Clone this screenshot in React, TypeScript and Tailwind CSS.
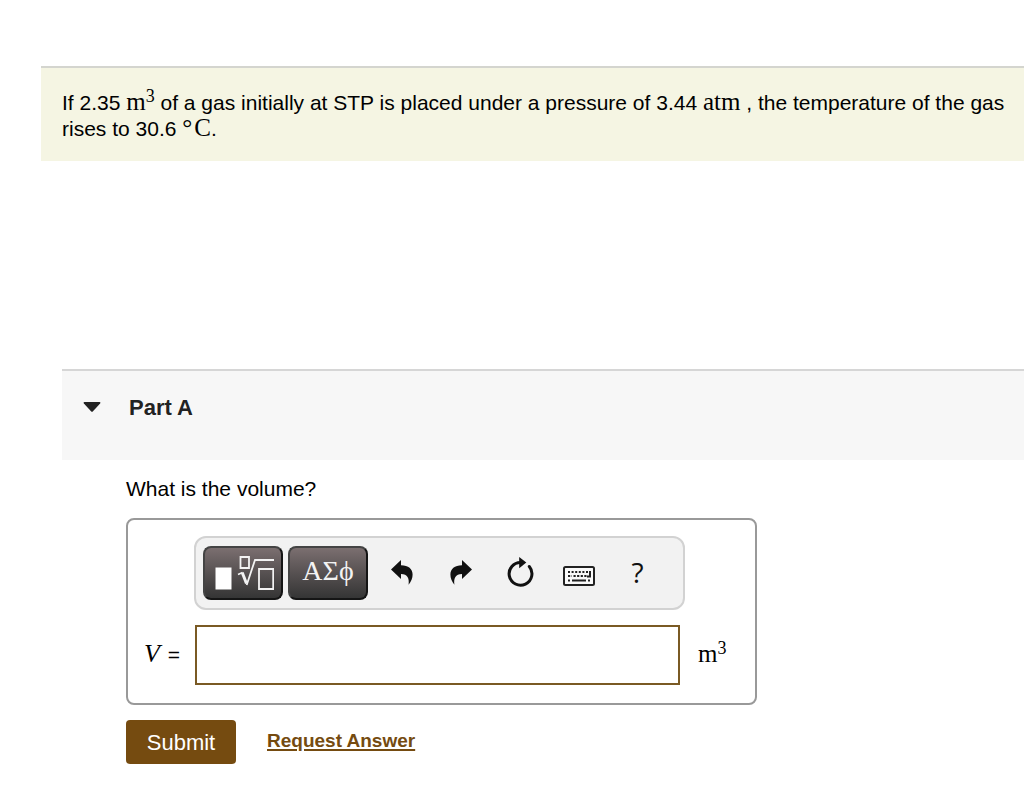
import type { ReactNode } from "react";

function Serif({ children }: { children: ReactNode }) {
  return (
    <span className="font-['Liberation_Serif',serif] text-[25px] leading-none">
      {children}
    </span>
  );
}

function CubicMetre() {
  return (
    <Serif>
      m<sup className="-top-2 text-lg leading-none">3</sup>
    </Serif>
  );
}

function ReplyArrow({ flipped = false }: { flipped?: boolean }) {
  return (
    <svg
      viewBox="0 0 22 25"
      className={flipped ? "h-[25px] w-[22px] -scale-x-100" : "h-[25px] w-[22px]"}
      fill="#111"
      aria-hidden="true"
    >
      <path d="M0 9.5 10 0v5.2C17.5 5.4 21.6 8.8 21.6 14.6c0 3.6-1.4 7-4 10.2.8-6.6-1-10.5-7.6-10.7V19Z" />
    </svg>
  );
}

function ResetIcon() {
  return (
    <svg viewBox="0 0 28 30" className="h-[30px] w-7" aria-hidden="true">
      <path
        d="M15 5.4A11.4 11.4 0 1 0 23.3 9.5"
        fill="none"
        stroke="#111"
        strokeWidth="3"
        strokeLinecap="round"
      />
      <path d="M13.2 0 20.3 5.6 13.2 11.2Z" fill="#111" />
    </svg>
  );
}

function KeyboardIcon() {
  return (
    <svg viewBox="0 0 32 20" className="h-5 w-8" aria-hidden="true">
      <rect x="1" y="1" width="30" height="18" rx="1.5" fill="#fafafa" stroke="#222" strokeWidth="2" />
      <g stroke="#222" strokeWidth="2" fill="none">
        <path d="M5 6h20" strokeDasharray="2 1.6" />
        <path d="M5 10h4M10.5 10h13" strokeDasharray="2.2 1.4" />
        <path d="M27 5v5.5h-3" />
        <path d="M5 14.5h2M9 14.5h14M25 14.5h2" />
      </g>
    </svg>
  );
}

function TemplateIcon() {
  return (
    <svg viewBox="0 0 62 38" className="h-[38px] w-[62px]" aria-hidden="true">
      <path d="M3.5 15.5h16v22h-16z" fill="#fff" />
      <g fill="none" stroke="#f3f3f3">
        <path d="M28.5 5H37v11h-8.5z" strokeWidth="1.8" />
        <path d="M26 22.5 30.5 20.5" strokeWidth="1.5" />
        <path d="M30.2 20.5 34.5 31.5" strokeWidth="3" />
        <path d="M34.7 33 43 8H62" strokeWidth="1.8" />
        <path d="M47 17h14.200v20H47z" strokeWidth="1.8" />
      </g>
    </svg>
  );
}

const darkKey =
  "flex h-[54px] w-20 items-center justify-center rounded-lg border-2 border-t-[#444] border-l-[#444] border-r-[#151515] border-b-[#151515] bg-linear-to-b from-[#7b6f70] to-[#353535] pb-1";

export default function App() {
  return (
    <main className="min-h-screen bg-white pt-[66px] pb-10 font-['Liberation_Sans',Arial,sans-serif] text-[21px] text-black">
      <section className="ml-[41px] border-t-2 border-[#d4d5cf] bg-[#f5f5e3] pt-[21px] pr-4 pb-5 pl-[21px] leading-[25px]">
        <p>
          If 2.35 <CubicMetre /> of a gas initially at STP is placed under a pressure of 3.44{" "}
          <Serif>atm</Serif> , the temperature of the gas rises to 30.6{" "}
          <Serif>
            <span className="mr-0.5">°</span>C
          </Serif>
          .
        </p>
      </section>

      <section className="mt-[208px] ml-[62px]">
        <header className="flex h-[91px] border-t-2 border-[#d6d6d6] bg-[#f7f7f7] pt-[22px] pl-[21px]">
          <button type="button" className="flex h-7 items-center gap-7 font-bold text-[#222]">
            <svg viewBox="0 0 18 10" className="h-2.5 w-[18px]" aria-hidden="true">
              <path d="M1.5 0h15q1.5.2.6 1.5L10 9.2q-1 1-2 0L.9 1.5Q0 .2 1.5 0Z" fill="#222" />
            </svg>
            <h2 className="text-[22px]">Part A</h2>
          </button>
        </header>

        <form className="pt-[15px] pl-16" onSubmit={(event) => event.preventDefault()}>
          <p className="leading-7">What is the volume?</p>

          <div className="mt-[15px] w-[631px] max-w-full rounded-lg border-2 border-[#999] px-4 pt-4 pb-[18px]">
            <div className="ml-[50px] flex h-[74px] w-[491px] items-center rounded-xl border-2 border-[#d2d2d2] bg-[#f2f2f2] pl-[7px]">
              <button type="button" className={darkKey} aria-label="Templates">
                <TemplateIcon />
              </button>
              <button
                type="button"
                className={`${darkKey} ml-[5px] font-['Liberation_Serif',serif] text-[28px] text-[#f3f3f3]`}
                aria-label="Symbols"
              >
                ΑΣϕ
              </button>
              <div className="ml-1 flex flex-1 items-center pb-0.5 text-[#111]">
                <button type="button" aria-label="Undo" className="flex w-[59px] justify-center">
                  <ReplyArrow />
                </button>
                <button type="button" aria-label="Redo" className="flex w-[59px] justify-center">
                  <ReplyArrow flipped />
                </button>
                <button type="button" aria-label="Reset" className="flex w-[59px] justify-center">
                  <ResetIcon />
                </button>
                <button type="button" aria-label="Keyboard shortcuts" className="flex w-[59px] justify-center pt-2">
                  <KeyboardIcon />
                </button>
                <button
                  type="button"
                  aria-label="Help"
                  className="w-[59px] text-center font-['Open_Sans',sans-serif] text-[28px] leading-8 font-medium"
                >
                  ?
                </button>
              </div>
            </div>

            <div className="mt-[15px] flex items-center">
              <label htmlFor="volume" className="w-[51px] whitespace-nowrap">
                <span className="mr-0.5 font-['Liberation_Serif',serif] text-[26px] leading-none italic">V</span>{" "}
                =
              </label>
              <input
                id="volume"
                type="text"
                className="h-[60px] w-[485px] border-2 border-[#7a5a24] bg-white px-3 outline-none"
              />
              <span className="ml-[18px]">
                <CubicMetre />
              </span>
            </div>
          </div>

          <div className="mt-[15px] flex items-center gap-[31px]">
            <button type="submit" className="h-11 w-[110px] rounded-sm bg-[#754b10] text-[22px] text-white">
              Submit
            </button>
            <a href="#answer" className="pb-0.5 text-[19px] leading-6 font-bold text-[#754b10] underline decoration-2 underline-offset-2">
              Request Answer
            </a>
          </div>
        </form>
      </section>
    </main>
  );
}
